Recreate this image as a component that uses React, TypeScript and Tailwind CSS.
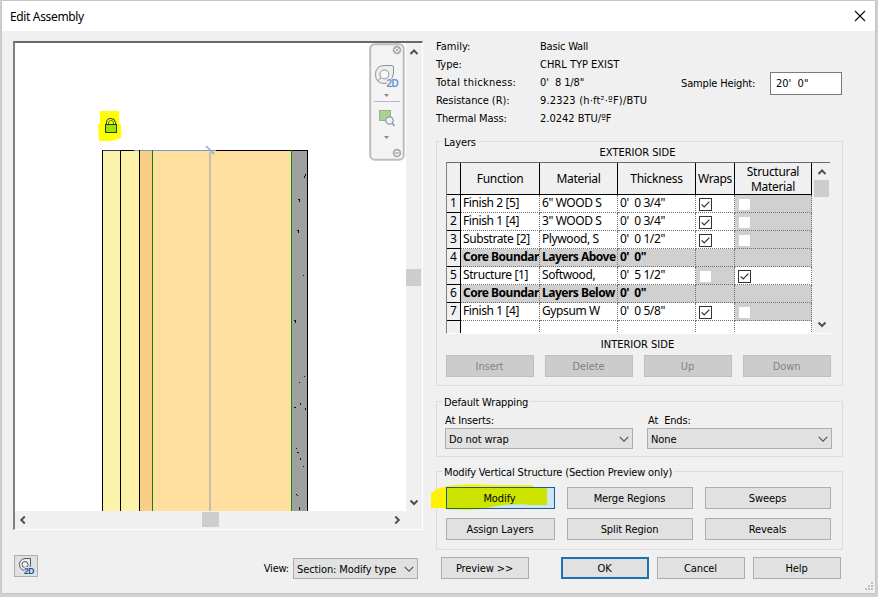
import React from "react";

const ui = "font-['DejaVu_Sans_Condensed','DejaVu_Sans',sans-serif]";

type Dir = "up" | "down" | "left" | "right";

function Chevron({ dir, thin }: { dir: Dir; thin?: boolean }) {
  const d = {
    up: "M1.5 7 L5 3.5 L8.5 7",
    down: "M1.5 3.5 L5 7 L8.5 3.5",
    left: "M6.8 1.5 L3.3 5 L6.8 8.5",
    right: "M3.3 1.5 L6.8 5 L3.3 8.5",
  }[dir];
  return (
    <svg width="10" height="10" viewBox="0 0 10 10" className="shrink-0">
      <path d={thin ? "M0.7 2.8 L5 7.1 L9.3 2.8" : d} fill="none" stroke="#505050" strokeWidth={thin ? 1.1 : 2} />
    </svg>
  );
}

function Group({ title, className, children }: { title: string; className: string; children: React.ReactNode }) {
  return (
    <section className={`flex w-[407px] flex-col border border-[#dcdcdc] ${className}`}>
      <h2 className="-mt-[6px] ml-[5px] h-[13px] shrink-0 self-start whitespace-nowrap bg-[#f0f0f0] px-[2px] text-[11px] font-normal leading-[13px] tracking-[-0.15px]">
        {title}
      </h2>
      {children}
    </section>
  );
}

function Button({ label, className = "", kind = "normal" }: { label: string; className?: string; kind?: "normal" | "disabled" | "primary" }) {
  const look =
    kind === "disabled"
      ? "border border-[#bfbfbf] bg-[#cccccc] text-[#838383]"
      : kind === "primary"
        ? "border-2 border-[#1a73b5] bg-[#e1e1e1]"
        : "border border-[#adadad] bg-[#e1e1e1]";
  return (
    <button className={`flex h-[22px] shrink-0 items-center justify-center whitespace-nowrap pr-[1px] text-[11px] leading-none tracking-[-0.1px] ${look} ${className}`}>
      {label}
    </button>
  );
}

function Select({ value, className }: { value: string; className: string }) {
  return (
    <button className={`flex h-[21px] items-center justify-between border border-[#adadad] bg-[#e1e1e1] px-[3px] pt-[1px] text-[11px] leading-none tracking-[-0.1px] ${className}`}>
      <span className="whitespace-nowrap">{value}</span>
      <Chevron dir="down" thin />
    </button>
  );
}

function Check({ on }: { on: boolean }) {
  if (!on) return <span className="ml-1 mt-[4px] block h-[11px] w-[11px] bg-white" />;
  return (
    <span className="ml-[3px] mt-[3px] flex h-[13px] w-[13px] items-center justify-center border border-[#333] bg-white">
      <svg width="11" height="11" viewBox="0 0 11 11">
        <path d="M1.6 5.3 L4.2 7.9 L9.4 2.6" fill="none" stroke="#333" strokeWidth="1.2" />
      </svg>
    </span>
  );
}

type Row = { fn: string; mat: string; thick: string; wraps?: boolean; struct?: boolean; core?: boolean };

const rows: Row[] = [
  { fn: "Finish 2 [5]", mat: '6" WOOD S', thick: "0'  0 3/4\"", wraps: true, struct: false },
  { fn: "Finish 1 [4]", mat: '3" WOOD S', thick: "0'  0 3/4\"", wraps: true, struct: false },
  { fn: "Substrate [2]", mat: "Plywood, S", thick: "0'  0 1/2\"", wraps: true, struct: false },
  { fn: "Core Boundar", mat: "Layers Above", thick: "0'  0\"", core: true },
  { fn: "Structure [1]", mat: "Softwood,", thick: "0'  5 1/2\"", wraps: false, struct: true },
  { fn: "Core Boundar", mat: "Layers Below", thick: "0'  0\"", core: true },
  { fn: "Finish 1 [4]", mat: "Gypsum W", thick: "0'  0 5/8\"", wraps: true, struct: false },
];

const cols = "grid grid-cols-[14px_79px_78px_78px_39px_77px]";

function LayerTable() {
  const head = "flex items-center justify-center border-b border-r border-black bg-[#f0f0f0] text-center tracking-[-0.3px]";
  const cell = "overflow-hidden whitespace-pre border-b border-r border-dotted border-[#707070] pl-[2px]";
  return (
    <div className="ml-[9px] mt-[3px] flex h-[172px] w-[384px] shrink-0 border-l border-t border-b border-l-[#808080] border-t-[#696969] border-b-white font-['Noto_Sans',sans-serif] text-[12px] leading-[15px]">
      <div className="flex h-[170px] w-[365px] flex-col overflow-hidden">
        <div className={`${cols} h-[32px] shrink-0`}>
          <div className={head} />
          <div className={head}>Function</div>
          <div className={head}>Material</div>
          <div className={head}>Thickness</div>
          <div className={head}>Wraps</div>
          <div className={head}>Structural<br />Material</div>
        </div>
        {rows.map((r, i) => (
          <div key={i} className={`${cols} h-[18px] shrink-0 ${r.core ? "bg-[#d0d0d0] font-bold tracking-[-0.5px]" : "bg-white tracking-[-0.4px]"}`}>
            <div className="border-b border-r border-black bg-[#f0f0f0] text-center font-normal tracking-normal">{i + 1}</div>
            <div className={cell}>{r.fn}</div>
            <div className={cell}>{r.mat}</div>
            <div className={cell}>{r.thick}</div>
            <div className={`border-b border-r border-dotted border-[#707070] ${r.wraps === false ? "bg-[#d0d0d0]" : ""}`}>
              {r.wraps !== undefined && <Check on={r.wraps} />}
            </div>
            <div className={`border-b border-r border-dotted border-[#707070] ${r.struct === false ? "bg-[#d0d0d0]" : ""}`}>
              {r.struct !== undefined && <Check on={r.struct} />}
            </div>
          </div>
        ))}
        <div className={`${cols} h-[13px] shrink-0 bg-white`}>
          <div className="border-r border-black bg-[#f0f0f0]" />
          <div className={cell} />
          <div className={cell} />
          <div className={cell} />
          <div className={cell} />
          <div className={cell} />
        </div>
      </div>
      <div className="ml-[2px] flex w-[15px] flex-col items-center bg-[#f0f0f0] pt-1">
        <Chevron dir="up" />
        <div className="mt-[3px] h-[17px] w-[15px] bg-[#cdcdcd]" />
        <div className="mt-auto mb-1 h-[10px]"><Chevron dir="down" /></div>
      </div>
    </div>
  );
}

function WallSection() {
  return (
    <svg width="391" height="468" viewBox="15 43 391 468" shapeRendering="crispEdges" className="block">
      <rect x="102" y="150" width="206" height="361" fill="#ffdf9e" />
      <rect x="102" y="150" width="37" height="361" fill="#fdf2aa" />
      <rect x="139" y="150" width="13" height="361" fill="#f7cf86" />
      <rect x="292" y="150" width="15" height="361" fill="#a0a0a0" />
      <rect x="102" y="150" width="206" height="1" fill="#000" />
      <rect x="102" y="150" width="18" height="1" fill="#33337c" />
      <rect x="134" y="150" width="82" height="1" fill="#8296c2" />
      <rect x="102" y="150" width="1" height="361" fill="#000" />
      <rect x="120" y="150" width="1" height="361" fill="#000" />
      <rect x="139" y="150" width="1" height="361" fill="#000" />
      <rect x="152" y="150" width="1" height="361" fill="#207a10" />
      <rect x="291" y="150" width="1" height="361" fill="#128a12" />
      <rect x="307" y="150" width="1" height="361" fill="#000" />
      <rect x="209" y="152" width="2" height="359" fill="#c4bdb0" />
      <path d="M206 146 L214 154" stroke="#88a4e4" strokeWidth="1.5" shapeRendering="auto" />
      <path d="M305 174v2M304 176v2M298 199h2M299 200v2M297 230h2M298 231v2M303 275h1M294 320h2M295 321v2M299 382h1M304 376h1M300 403v2M294 407h2M305 408v2M296 448h1M297 452h2M300 458v2M303 466h1M296 494l2 2M299 507v3" stroke="#111" strokeWidth="1" />
      <path d="M100 111H119V124H121V138Q116 140 110 141H99L98 124H100Z" fill="#ffff00" shapeRendering="auto" />
      <g shapeRendering="auto" fill="none" stroke="#143c32">
        <path d="M106.5 125V122.5Q106.5 118.5 110.8 118.5T115.5 122.5V125" />
        <path d="M108.5 125V123Q108.5 120.5 111 120.5T113.5 123V125" strokeWidth=".7" />
        <rect x="105.5" y="124.5" width="11" height="8" fill="#a4e000" />
      </g>
    </svg>
  );
}

function NavBar() {
  return (
    <div className="absolute right-[1px] top-0 h-[118px] w-[36px]">
      <svg width="36" height="118" viewBox="369 43 36 118">
        <rect x="370.2" y="44.2" width="33.5" height="115.5" rx="4.5" fill="#f4f4f4" stroke="#bdbdbd" strokeWidth="2" />
        <circle cx="397" cy="50" r="3.4" fill="#f4f4f4" stroke="#a8a8a8" strokeWidth="1.7" />
        <path d="M395.3 48.3l3.4 3.4M398.7 48.3l-3.4 3.4" stroke="#a8a8a8" />
        <path d="M384 65.5H392Q393.5 65.5 393.5 67V73Q392 83.5 384 83.5Q375.5 83 375.5 74.5Q375.5 66 384 65.5Z" fill="#eeeeee" stroke="#8d929b" />
        <circle cx="384.4" cy="74.4" r="4.5" fill="#f8f8f8" stroke="#8d929b" />
        <path d="M378 80.5L381.2 77.8" stroke="#8d929b" />
        <rect x="387" y="79" width="12" height="9" fill="#f4f4f4" />
        <text x="386.5" y="87.3" fontFamily="Liberation Sans, sans-serif" fontSize="10" fontWeight="bold" letterSpacing="-.6" fill="#6c94cd">2D</text>
        <path d="M384 94h5l-2.5 3z" fill="#888" />
        <path d="M374 101.5h26" stroke="#c0b6c9" />
        <rect x="379.5" y="110.5" width="11" height="10" fill="#a8d098" stroke="#91b783" />
        <circle cx="389.5" cy="120.5" r="3.7" fill="#eef2f5" stroke="#8e959d" strokeWidth="1.2" />
        <path d="M392 123l2.5 3" stroke="#8e959d" strokeWidth="1.5" />
        <path d="M384 136h5l-2.5 3z" fill="#888" />
        <circle cx="397" cy="153" r="3.4" fill="#f4f4f4" stroke="#a8a8a8" strokeWidth="1.7" />
        <path d="M395 153h4" stroke="#a8a8a8" strokeWidth="1.3" />
      </svg>
    </div>
  );
}

function Preview() {
  return (
    <div className="flex h-[489px] w-[410px] shrink-0 flex-col border-l-2 border-t-2 border-b border-r border-l-[#808080] border-t-[#696969] border-b-white border-r-white bg-[#f0f0f0]">
      <div className="flex h-[468px]">
        <div className="relative w-[391px] bg-white">
          <WallSection />
          <NavBar />
        </div>
        <div className="flex w-[15px] flex-col items-center pt-[4px] pb-[4px]">
          <Chevron dir="up" />
          <div className="mt-[212px] h-[17px] w-[15px] bg-[#cdcdcd]" />
          <div className="mt-auto h-[10px]"><Chevron dir="down" /></div>
        </div>
      </div>
      <div className="mt-[1px] flex h-[15px] w-[391px] items-center pl-[3px] pr-[4px]">
        <Chevron dir="left" />
        <div className="ml-[174px] h-[15px] w-[17px] bg-[#cdcdcd]" />
        <div className="ml-auto h-[10px]"><Chevron dir="right" /></div>
      </div>
    </div>
  );
}

const info = [
  { name: "Family:", value: "Basic Wall", nameGap: "tracking-normal", valueGap: "tracking-[-0.2px]" },
  { name: "Type:", value: "CHRL TYP EXIST", nameGap: "tracking-normal", valueGap: "tracking-normal" },
  { name: "Total thickness:", value: "0'  8 1/8\"", nameGap: "tracking-[0.25px]", valueGap: "tracking-[-0.1px]" },
  { name: "Resistance (R):", value: "9.2323 (h·ft²·ºF)/BTU", nameGap: "tracking-[-0.05px]", valueGap: "tracking-[0.2px]" },
  { name: "Thermal Mass:", value: "2.0242 BTU/ºF", nameGap: "tracking-[-0.1px]", valueGap: "tracking-normal" },
];

export default function App() {
  return (
    <div className={`h-[597px] w-[878px] overflow-hidden bg-[#d2d2d2] pl-[2px] pt-[1px] text-[11px] leading-[13px] text-black ${ui}`}>
      <div className="flex h-[592px] w-[873px] flex-col bg-[#f0f0f0] shadow-[0_0_2px_#aaa]">
        <header className="flex h-[30px] shrink-0 items-center justify-between bg-white pl-[8px] pr-[9px]">
          <h1 className="font-['Noto_Sans',sans-serif] text-[12px] font-normal tracking-[-0.35px]">Edit Assembly</h1>
          <svg width="12" height="12" viewBox="0 0 12 12">
            <path d="M1 1L11 11M11 1L1 11" stroke="#111" strokeWidth="1.2" />
          </svg>
        </header>
        <main className="flex flex-1 pl-[11px] pt-[10px]">
          <div className="flex w-[410px] flex-col">
            <Preview />
            <div className="flex justify-between pr-[5px] pt-[25px]">
              <button className="ml-[1px] flex h-[22px] w-[24px] items-center justify-center border border-[#adadad] bg-[#e1e1e1]">
                <svg width="20" height="20" viewBox="0 0 20 20">
                  <path d="M9 2.5H14.5V9Q13 15 8.5 14.5Q3.5 13.5 3.5 8.5Q3.5 3.5 9 2.5Z" fill="#f0f0f0" stroke="#4c5664" />
                  <circle cx="9" cy="8.5" r="3" fill="none" stroke="#4c5664" />
                  <rect x="8.5" y="11" width="11" height="8" fill="#e1e1e1" />
                  <text x="8" y="18" fontFamily="Liberation Sans, sans-serif" fontSize="8.5" fontWeight="bold" letterSpacing="-.4" fill="#16509c">2D</text>
                </svg>
              </button>
              <div className="flex items-start pt-[3px]">
                <span className="mr-[4px] pt-[4px] tracking-[-0.2px]">View:</span>
                <Select value="Section: Modify type" className="w-[125px]" />
              </div>
            </div>
          </div>

          <div className="ml-[13px] flex w-[407px] flex-col">
            <div className="flex h-[100px] shrink-0">
              <dl className="-mt-[1px] grid h-[90px] grid-cols-[104px_141px] grid-rows-5">
                {info.map((item) => (
                  <React.Fragment key={item.name}>
                    <dt className={`whitespace-nowrap ${item.nameGap}`}>{item.name}</dt>
                    <dd className={`whitespace-pre ${item.valueGap}`}>{item.value}</dd>
                  </React.Fragment>
                ))}
              </dl>
              <div className="mt-[31px] flex h-[23px] items-center">
                <span className="w-[89px] whitespace-nowrap tracking-[-0.15px]">Sample Height:</span>
                <input className="h-[23px] w-[72px] border border-[#7a7a7a] bg-white pl-[5px]" defaultValue={"20'  0\""} />
              </div>
            </div>

            <Group title="Layers" className="h-[245px] shrink-0">
              <p className="-mt-[3px] pr-[4px] text-center">EXTERIOR SIDE</p>
              <LayerTable />
              <p className="mt-[4px] pr-[4px] text-center">INTERIOR SIDE</p>
              <div className="ml-[9px] mt-[4px] flex gap-[11px]">
                <Button label="Insert" kind="disabled" className="w-[88px]" />
                <Button label="Delete" kind="disabled" className="w-[88px]" />
                <Button label="Up" kind="disabled" className="w-[88px]" />
                <Button label="Down" kind="disabled" className="w-[88px]" />
              </div>
            </Group>

            <Group title="Default Wrapping" className="mt-[15px] h-[56px] shrink-0">
              <div className="ml-[8px] mt-[5px] flex gap-[14px] tracking-[-0.15px]">
                <label>At Inserts:<Select value="Do not wrap" className="mt-[1px] w-[188px]" /></label>
                <label><span className="pl-[1px]">At&nbsp; Ends:</span><Select value="None" className="mt-[1px] w-[185px]" /></label>
              </div>
            </Group>

            <Group title="Modify Vertical Structure (Section Preview only)" className="mt-[14px] h-[79px] shrink-0">
              <div className="ml-[9px] mt-[8px] grid grid-cols-[109px_126px_126px] gap-x-[12px] gap-y-[9px]">
                <div className="relative">
                  <svg className="absolute -left-[16px] -top-[4px]" width="118" height="28" viewBox="430 483 118 28">
                    <path d="M431 493Q434 492 436 489Q443 488 447 486Q462 483 495 485H533V488H547V505H530Q515 503 498 506Q480 511 461 510Q446 510 443 508L431 508Z" fill="#fff200" />
                  </svg>
                  <button className="relative flex h-[22px] w-[109px] items-center justify-center overflow-hidden border border-[#1d5a9a] bg-[#cce6f8] pr-[2px] text-[11px] tracking-[-0.1px]">
                    <svg className="absolute left-0 top-0" width="107" height="20" viewBox="447 488 107 20">
                      <path d="M447 488H547V505H530Q515 503 498 506L485 508H447Z" fill="#cde400" />
                    </svg>
                    <span className="relative">Modify</span>
                  </button>
                </div>
                <Button label="Merge Regions" />
                <Button label="Sweeps" />
                <Button label="Assign Layers" />
                <Button label="Split Region" />
                <Button label="Reveals" />
              </div>
            </Group>

            <div className="ml-[5px] mt-[7px] flex">
              <Button label="Preview >>" className="w-[88px]" />
              <Button label="OK" kind="primary" className="ml-[32px] w-[88px]" />
              <Button label="Cancel" className="ml-[8px] w-[88px]" />
              <Button label="Help" className="ml-[8px] w-[88px]" />
            </div>
          </div>
          <svg className="mb-[2px] ml-auto mr-[1px] self-end" width="9" height="9" viewBox="0 0 9 9">
            <path d="M6 0h2v2h-2zM3 3h2v2h-2zM6 3h2v2h-2zM0 6h2v2h-2zM3 6h2v2h-2zM6 6h2v2h-2z" fill="#bdbdbd" />
          </svg>
        </main>
      </div>
    </div>
  );
}
